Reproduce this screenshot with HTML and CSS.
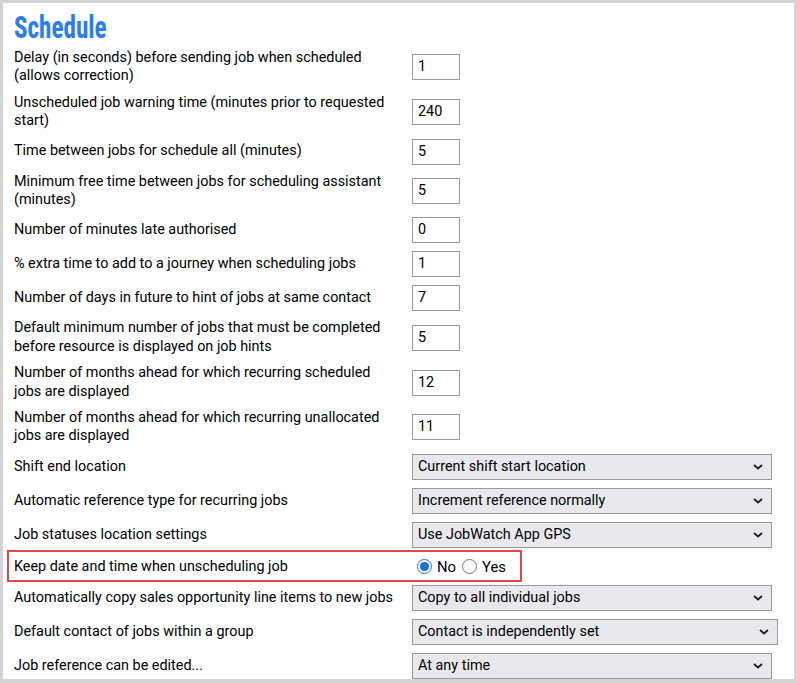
FILE: index.html
```html
<!DOCTYPE html>
<html lang="en">
<head>
<meta charset="utf-8">
<title>Schedule</title>
<link rel="stylesheet" href="styles.css">
</head>
<body>
<div class="page">
  <h1 class="title">Schedule</h1>
  <table class="settings">
    <tr>
      <td class="label">Delay (in seconds) before sending job when scheduled (allows correction)</td>
      <td class="field"><div class="textbox">1</div></td>
    </tr>
    <tr>
      <td class="label">Unscheduled job warning time (minutes prior to requested start)</td>
      <td class="field"><div class="textbox">240</div></td>
    </tr>
    <tr>
      <td class="label">Time between jobs for schedule all (minutes)</td>
      <td class="field"><div class="textbox">5</div></td>
    </tr>
    <tr>
      <td class="label">Minimum free time between jobs for scheduling assistant (minutes)</td>
      <td class="field"><div class="textbox">5</div></td>
    </tr>
    <tr>
      <td class="label">Number of minutes late authorised</td>
      <td class="field"><div class="textbox">0</div></td>
    </tr>
    <tr>
      <td class="label">% extra time to add to a journey when scheduling jobs</td>
      <td class="field"><div class="textbox">1</div></td>
    </tr>
    <tr>
      <td class="label">Number of days in future to hint of jobs at same contact</td>
      <td class="field"><div class="textbox">7</div></td>
    </tr>
    <tr>
      <td class="label">Default minimum number of jobs that must be completed before resource is displayed on job hints</td>
      <td class="field"><div class="textbox">5</div></td>
    </tr>
    <tr>
      <td class="label">Number of months ahead for which recurring scheduled jobs are displayed</td>
      <td class="field"><div class="textbox">12</div></td>
    </tr>
    <tr>
      <td class="label">Number of months ahead for which recurring unallocated jobs are displayed</td>
      <td class="field"><div class="textbox">11</div></td>
    </tr>
    <tr>
      <td class="label">Shift end location</td>
      <td class="field"><div class="select"><span>Current shift start location</span><svg class="chev" width="10" height="6" viewBox="0 0 10 6"><path d="M1 1l4 3.5L9 1" fill="none" stroke="#1e1e1e" stroke-width="1.8"/></svg></div></td>
    </tr>
    <tr>
      <td class="label">Automatic reference type for recurring jobs</td>
      <td class="field"><div class="select"><span>Increment reference normally</span><svg class="chev" width="10" height="6" viewBox="0 0 10 6"><path d="M1 1l4 3.5L9 1" fill="none" stroke="#1e1e1e" stroke-width="1.8"/></svg></div></td>
    </tr>
    <tr>
      <td class="label">Job statuses location settings</td>
      <td class="field"><div class="select"><span>Use JobWatch App GPS</span><svg class="chev" width="10" height="6" viewBox="0 0 10 6"><path d="M1 1l4 3.5L9 1" fill="none" stroke="#1e1e1e" stroke-width="1.8"/></svg></div></td>
    </tr>
    <tr class="radio-row">
      <td class="label">Keep date and time when unscheduling job</td>
      <td class="field">
        <div class="radios">
          <label class="opt"><input type="radio" name="keep" checked><span>No</span></label>
          <label class="opt"><input type="radio" name="keep"><span>Yes</span></label>
        </div>
      </td>
    </tr>
    <tr>
      <td class="label">Automatically copy sales opportunity line items to new jobs</td>
      <td class="field"><div class="select"><span>Copy to all individual jobs</span><svg class="chev" width="10" height="6" viewBox="0 0 10 6"><path d="M1 1l4 3.5L9 1" fill="none" stroke="#1e1e1e" stroke-width="1.8"/></svg></div></td>
    </tr>
    <tr>
      <td class="label">Default contact of jobs within a group</td>
      <td class="field"><div class="select wide"><span>Contact is independently set</span><svg class="chev" width="10" height="6" viewBox="0 0 10 6"><path d="M1 1l4 3.5L9 1" fill="none" stroke="#1e1e1e" stroke-width="1.8"/></svg></div></td>
    </tr>
    <tr>
      <td class="label">Job reference can be edited...</td>
      <td class="field"><div class="select"><span>At any time</span><svg class="chev" width="10" height="6" viewBox="0 0 10 6"><path d="M1 1l4 3.5L9 1" fill="none" stroke="#1e1e1e" stroke-width="1.8"/></svg></div></td>
    </tr>
  </table>
  <div class="highlight"></div>
</div>
</body>
</html>
```

FILE: styles.css
```css
html, body {
  margin: 0;
  padding: 0;
}

body {
  background: #d4d4d4;
  font-family: Roboto, "Liberation Sans", sans-serif;
  font-size: 14.4px;
  color: #000;
}

.page {
  position: relative;
  margin: 3px 3px 0 3px;
  height: 676px;
  background: #fff;
  overflow: hidden;
}

.title {
  margin: 7px 0 0 11px;
  font-family: "Roboto Condensed", Roboto, sans-serif;
  font-stretch: condensed;
  font-weight: 700;
  font-size: 31px;
  line-height: 35px;
  color: #2a7cf2;
  transform: scaleX(0.81);
  transform-origin: left center;
  width: 200px;
}

.settings {
  margin-left: 7px;
  border-collapse: collapse;
  border-spacing: 0;
}

.settings td {
  padding: 4px;
  vertical-align: middle;
}

.settings td.label {
  width: 380px;
  padding-right: 14px;
  line-height: 18.4px;
}

.textbox {
  box-sizing: border-box;
  width: 48px;
  height: 26px;
  border: 1px solid #9a9a9a;
  padding: 0 5px;
  line-height: 24px;
  color: #000;
}

.select {
  box-sizing: border-box;
  width: 360px;
  height: 26px;
  border: 1px solid #9a9a9a;
  background: #e9e9ed;
  padding: 0 8px 0 5px;
  display: flex;
  align-items: center;
  justify-content: space-between;
  color: #000;
}

.select.wide {
  width: 366px;
}

.chev {
  display: block;
}

.settings .radio-row td {
  padding-top: 4px;
  padding-bottom: 3px;
}

.radios {
  display: flex;
  align-items: center;
  height: 22px;
  padding-left: 5px;
  gap: 6px;
  font-size: 14.8px;
  color: #000;
}

.opt {
  display: flex;
  align-items: center;
}

.opt input {
  width: 15px;
  height: 15px;
  margin: 0 5px 0 0;
  accent-color: #1a6fe0;
}

.highlight {
  position: absolute;
  left: 4px;
  top: 547px;
  width: 515px;
  height: 32px;
  box-sizing: border-box;
  border: 2px solid #e04848;
  pointer-events: none;
}
```
